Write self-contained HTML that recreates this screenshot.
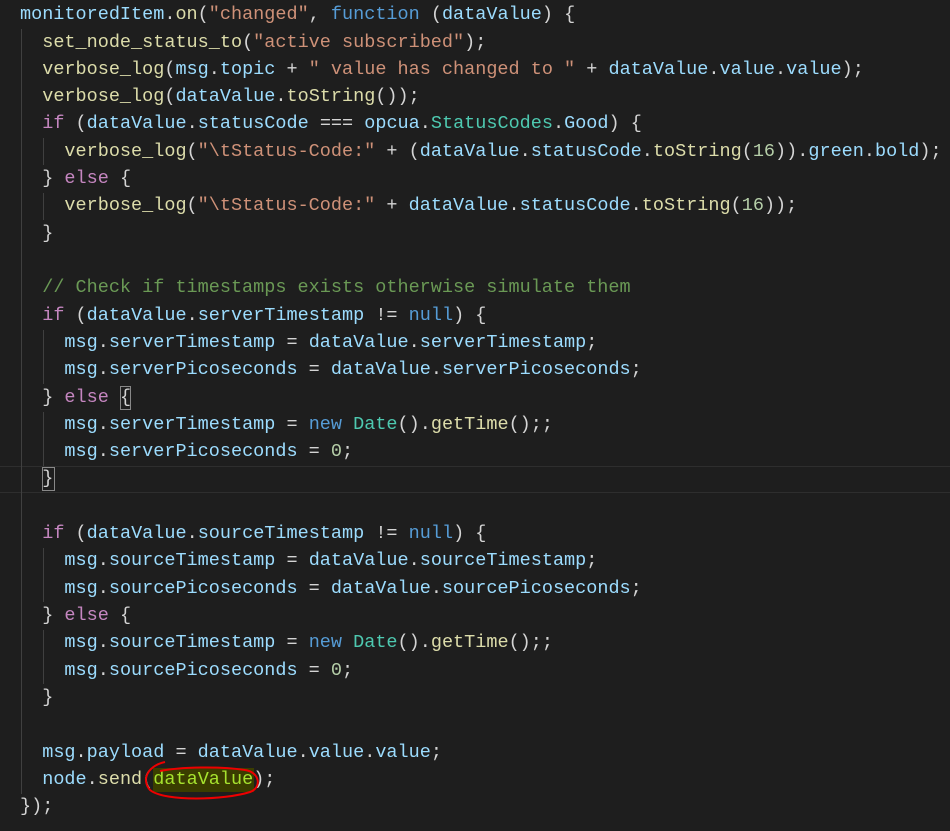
<!DOCTYPE html>
<html><head><meta charset="utf-8"><style>
html,body{margin:0;padding:0;background:#1e1e1e;width:950px;height:831px;overflow:hidden;position:relative}
.l{position:absolute;left:20px;height:27px;line-height:27px;white-space:pre;font-family:"Liberation Mono",monospace;font-size:18.5px;color:#d4d4d4}
.v{color:#9cdcfe}.f{color:#dcdcaa}.s{color:#ce9178}.k{color:#569cd6}.c{color:#c586c0}.t{color:#4ec9b0}.n{color:#b5cea8}.m{color:#6a9955}
.g{position:absolute;width:1px;background:#404040}
</style></head><body>
<div style="position:absolute;left:0;top:466px;width:950px;height:25px;border-top:1px solid #2e2e2e;border-bottom:1px solid #2e2e2e"></div>
<div class="g" style="left:21px;top:29px;height:765px"></div>
<div class="g" style="left:43px;top:138px;height:27px"></div>
<div class="g" style="left:43px;top:193px;height:27px"></div>
<div class="g" style="left:43px;top:330px;height:54px"></div>
<div class="g" style="left:43px;top:412px;height:54px"></div>
<div class="g" style="left:43px;top:548px;height:54px"></div>
<div class="g" style="left:43px;top:630px;height:54px"></div>
<div style="position:absolute;left:120px;top:386px;width:11px;height:24px;border:1px solid #888;box-sizing:border-box"></div>
<div style="position:absolute;left:42px;top:467px;width:13px;height:24px;border:1px solid #888;box-sizing:border-box"></div>
<div style="position:absolute;left:153px;top:768px;width:101px;height:24px;background:#3a3d00"></div>
<div class="l" style="top:1px"><span class="v">monitoredItem</span>.<span class="f">on</span>(<span class="s">"changed"</span>, <span class="k">function</span> (<span class="v">dataValue</span>) {</div>
<div class="l" style="top:29px">  <span class="f">set_node_status_to</span>(<span class="s">"active subscribed"</span>);</div>
<div class="l" style="top:56px">  <span class="f">verbose_log</span>(<span class="v">msg</span>.<span class="v">topic</span> + <span class="s">" value has changed to "</span> + <span class="v">dataValue</span>.<span class="v">value</span>.<span class="v">value</span>);</div>
<div class="l" style="top:83px">  <span class="f">verbose_log</span>(<span class="v">dataValue</span>.<span class="f">toString</span>());</div>
<div class="l" style="top:110px">  <span class="c">if</span> (<span class="v">dataValue</span>.<span class="v">statusCode</span> === <span class="v">opcua</span>.<span class="t">StatusCodes</span>.<span class="v">Good</span>) {</div>
<div class="l" style="top:138px">    <span class="f">verbose_log</span>(<span class="s">"\tStatus-Code:"</span> + (<span class="v">dataValue</span>.<span class="v">statusCode</span>.<span class="f">toString</span>(<span class="n">16</span>)).<span class="v">green</span>.<span class="v">bold</span>);</div>
<div class="l" style="top:165px">  } <span class="c">else</span> {</div>
<div class="l" style="top:192px">    <span class="f">verbose_log</span>(<span class="s">"\tStatus-Code:"</span> + <span class="v">dataValue</span>.<span class="v">statusCode</span>.<span class="f">toString</span>(<span class="n">16</span>));</div>
<div class="l" style="top:220px">  }</div>
<div class="l" style="top:274px">  <span class="m">// Check if timestamps exists otherwise simulate them</span></div>
<div class="l" style="top:302px">  <span class="c">if</span> (<span class="v">dataValue</span>.<span class="v">serverTimestamp</span> != <span class="k">null</span>) {</div>
<div class="l" style="top:329px">    <span class="v">msg</span>.<span class="v">serverTimestamp</span> = <span class="v">dataValue</span>.<span class="v">serverTimestamp</span>;</div>
<div class="l" style="top:356px">    <span class="v">msg</span>.<span class="v">serverPicoseconds</span> = <span class="v">dataValue</span>.<span class="v">serverPicoseconds</span>;</div>
<div class="l" style="top:384px">  } <span class="c">else</span> {</div>
<div class="l" style="top:411px">    <span class="v">msg</span>.<span class="v">serverTimestamp</span> = <span class="k">new</span> <span class="t">Date</span>().<span class="f">getTime</span>();;</div>
<div class="l" style="top:438px">    <span class="v">msg</span>.<span class="v">serverPicoseconds</span> = <span class="n">0</span>;</div>
<div class="l" style="top:465px">  }</div>
<div class="l" style="top:520px">  <span class="c">if</span> (<span class="v">dataValue</span>.<span class="v">sourceTimestamp</span> != <span class="k">null</span>) {</div>
<div class="l" style="top:547px">    <span class="v">msg</span>.<span class="v">sourceTimestamp</span> = <span class="v">dataValue</span>.<span class="v">sourceTimestamp</span>;</div>
<div class="l" style="top:575px">    <span class="v">msg</span>.<span class="v">sourcePicoseconds</span> = <span class="v">dataValue</span>.<span class="v">sourcePicoseconds</span>;</div>
<div class="l" style="top:602px">  } <span class="c">else</span> {</div>
<div class="l" style="top:629px">    <span class="v">msg</span>.<span class="v">sourceTimestamp</span> = <span class="k">new</span> <span class="t">Date</span>().<span class="f">getTime</span>();;</div>
<div class="l" style="top:657px">    <span class="v">msg</span>.<span class="v">sourcePicoseconds</span> = <span class="n">0</span>;</div>
<div class="l" style="top:684px">  }</div>
<div class="l" style="top:739px">  <span class="v">msg</span>.<span class="v">payload</span> = <span class="v">dataValue</span>.<span class="v">value</span>.<span class="v">value</span>;</div>
<div class="l" style="top:766px">  <span class="v">node</span>.<span class="f">send</span>(<span style="color:#a6e22e">dataValue</span>);</div>
<div class="l" style="top:793px">});</div>
<svg style="position:absolute;left:0;top:0" width="950" height="831"><path d="M165 762 C150 765 140 778 150 790 C165 802 225 800 250 792 C262 788 260 772 245 770 C220 766 180 767 160 771" fill="none" stroke="#e00" stroke-width="2"/></svg>
</body></html>
